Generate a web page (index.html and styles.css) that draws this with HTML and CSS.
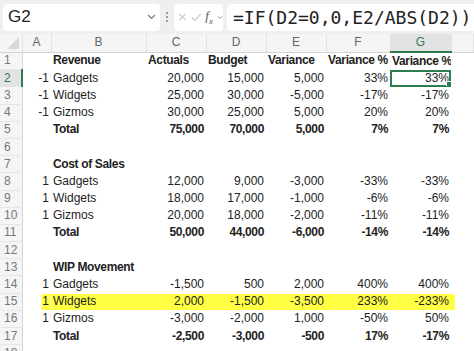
FILE: index.html
```html
<!DOCTYPE html>
<html lang="en">
  <head>
    <meta charset="UTF-8" />
    <meta name="viewport" content="width=device-width, initial-scale=1.0" />
    <title>Variance sheet</title>
    <link rel="stylesheet" href="styles.css">
  </head>
  <body>
    <div class="toolbar">
      <div class="namebox">
        <span>G2</span>
        <svg class="chev" width="9" height="6" viewBox="0 0 9 6"><path d="M1 1l3.5 3.5L8 1" fill="none" stroke="#777" stroke-width="1.2"/></svg>
      </div>
      <div class="dots"><i></i><i></i><i></i></div>
      <div class="fxbox">
        <svg width="10" height="10" viewBox="0 0 10 10"><path d="M1.5 1.5l7 7M8.5 1.5l-7 7" stroke="#c4c4c4" stroke-width="1.2"/></svg>
        <svg width="12" height="10" viewBox="0 0 12 10"><path d="M1 5.5l3.5 3.5L11 1.5" fill="none" stroke="#c4c4c4" stroke-width="1.2"/></svg>
        <span class="fx">f<sub>x</sub></span>
        <svg width="7" height="5" viewBox="0 0 7 5"><path d="M1 1l2.5 2.5L6 1" fill="none" stroke="#888" stroke-width="1"/></svg>
      </div>
      <div class="formula">=IF(D2=0,0,E2/ABS(D2))</div>
    </div>

    <table class="sheet">
      <colgroup>
        <col class="c-rh"><col class="c-a"><col class="c-b"><col class="c-n"><col class="c-n"><col class="c-n"><col class="c-f"><col class="c-g"><col>
      </colgroup>
      <thead>
        <tr>
          <th class="corner"><span class="tri"></span></th>
          <th>A</th><th>B</th><th>C</th><th>D</th><th>E</th><th>F</th><th class="active">G</th><th></th>
        </tr>
      </thead>
      <tbody>
        <tr><td class="rh">1</td><td></td><td class="b">Revenue</td><td class="b">Actuals</td><td class="b">Budget</td><td class="b">Variance</td><td class="b">Variance %</td><td class="b">Variance %</td><td></td></tr>
        <tr><td class="rh sel">2</td><td class="r">-1</td><td>Gadgets</td><td class="r">20,000</td><td class="r">15,000</td><td class="r">5,000</td><td class="r">33%</td><td class="r cur">33%<span class="handle"></span></td><td></td></tr>
        <tr><td class="rh">3</td><td class="r">-1</td><td>Widgets</td><td class="r">25,000</td><td class="r">30,000</td><td class="r">-5,000</td><td class="r">-17%</td><td class="r">-17%</td><td></td></tr>
        <tr><td class="rh">4</td><td class="r">-1</td><td>Gizmos</td><td class="r">30,000</td><td class="r">25,000</td><td class="r">5,000</td><td class="r">20%</td><td class="r">20%</td><td></td></tr>
        <tr><td class="rh">5</td><td></td><td class="b">Total</td><td class="r b">75,000</td><td class="r b">70,000</td><td class="r b">5,000</td><td class="r b">7%</td><td class="r b">7%</td><td></td></tr>
        <tr><td class="rh">6</td><td></td><td></td><td></td><td></td><td></td><td></td><td></td><td></td></tr>
        <tr><td class="rh">7</td><td></td><td class="b">Cost of Sales</td><td></td><td></td><td></td><td></td><td></td><td></td></tr>
        <tr><td class="rh">8</td><td class="r">1</td><td>Gadgets</td><td class="r">12,000</td><td class="r">9,000</td><td class="r">-3,000</td><td class="r">-33%</td><td class="r">-33%</td><td></td></tr>
        <tr><td class="rh">9</td><td class="r">1</td><td>Widgets</td><td class="r">18,000</td><td class="r">17,000</td><td class="r">-1,000</td><td class="r">-6%</td><td class="r">-6%</td><td></td></tr>
        <tr><td class="rh">10</td><td class="r">1</td><td>Gizmos</td><td class="r">20,000</td><td class="r">18,000</td><td class="r">-2,000</td><td class="r">-11%</td><td class="r">-11%</td><td></td></tr>
        <tr><td class="rh">11</td><td></td><td class="b">Total</td><td class="r b">50,000</td><td class="r b">44,000</td><td class="r b">-6,000</td><td class="r b">-14%</td><td class="r b">-14%</td><td></td></tr>
        <tr><td class="rh">12</td><td></td><td></td><td></td><td></td><td></td><td></td><td></td><td></td></tr>
        <tr><td class="rh">13</td><td></td><td class="b">WIP Movement</td><td></td><td></td><td></td><td></td><td></td><td></td></tr>
        <tr><td class="rh">14</td><td class="r">1</td><td>Gadgets</td><td class="r">-1,500</td><td class="r">500</td><td class="r">2,000</td><td class="r">400%</td><td class="r">400%</td><td></td></tr>
        <tr class="hl"><td class="rh">15</td><td class="r hl-start">1</td><td>Widgets</td><td class="r">2,000</td><td class="r">-1,500</td><td class="r">-3,500</td><td class="r">233%</td><td class="r">-233%</td><td class="hl-end"></td></tr>
        <tr><td class="rh">16</td><td class="r">1</td><td>Gizmos</td><td class="r">-3,000</td><td class="r">-2,000</td><td class="r">1,000</td><td class="r">-50%</td><td class="r">50%</td><td></td></tr>
        <tr><td class="rh">17</td><td></td><td class="b">Total</td><td class="r b">-2,500</td><td class="r b">-3,000</td><td class="r b">-500</td><td class="r b">17%</td><td class="r b">-17%</td><td></td></tr>
        <tr><td class="rh">18</td><td></td><td></td><td></td><td></td><td></td><td></td><td></td><td></td></tr>
      </tbody>
    </table>
  </body>
</html>
```
FILE: styles.css
```css
body {
  margin: 0;
  background: #fff;
  font-family: "Liberation Sans", Arial, sans-serif;
  color: #222;
  overflow: hidden;
}
.toolbar {
  display: flex;
  align-items: center;
  height: 34px;
  background: #efefef;
  padding-left: 3px;
}
.namebox {
  display: flex;
  align-items: center;
  justify-content: space-between;
  width: 157px;
  height: 27px;
  box-sizing: border-box;
  background: #fff;
  border-radius: 4px;
  padding: 0 4px 0 5px;
  font-size: 17px;
  color: #222;
}
.dots {
  display: flex;
  flex-direction: column;
  gap: 2px;
  margin: 0 6px 0 6px;
}
.dots i {
  display: block;
  width: 2px;
  height: 2px;
  background: #999;
}
.fxbox {
  display: flex;
  align-items: center;
  gap: 4px;
  width: 49px;
  height: 27px;
  box-sizing: border-box;
  background: #fff;
  border-radius: 4px;
  padding-left: 4px;
}
.fx {
  font-family: "Liberation Serif", serif;
  font-style: italic;
  font-size: 13px;
  color: #555;
}
.fx sub {
  font-size: 9px;
}
.formula {
  flex: 1;
  height: 27px;
  margin-left: 4px;
  background: #fff;
  border-radius: 4px 0 0 4px;
  padding-left: 6px;
  font-family: "DejaVu Sans Mono", monospace;
  font-size: 18px;
  line-height: 27px;
  color: #222;
  white-space: nowrap;
  overflow: hidden;
}
.sheet {
  border-collapse: collapse;
  table-layout: fixed;
  width: 474px;
  font-size: 12px;
}
.c-rh { width: 22px; }
.c-a { width: 29px; }
.c-b { width: 95px; }
.c-n { width: 60px; }
.c-f { width: 64px; }
.c-g { width: 61px; }
th {
  height: 17px;
  padding: 0;
  background: #f5f5f5;
  border-right: 1px solid #e2e2e2;
  border-bottom: 1px solid #d4d4d4;
  font-weight: normal;
  font-size: 12px;
  line-height: 17px;
  color: #666;
  text-align: center;
}
th.active {
  background: #e3e3e3;
  color: #3a7a55;
  border-bottom: 2px solid #2e7d4f;
}
th.corner {
  position: relative;
}
.tri {
  position: absolute;
  right: 3px;
  bottom: 3px;
  width: 0;
  height: 0;
  border-left: 12px solid transparent;
  border-bottom: 12px solid #d8d8d8;
}
td {
  height: 16.2px;
  padding: 0 2px;
  white-space: nowrap;
  overflow: hidden;
  line-height: 15px;
  border-bottom: 1px solid transparent;
}
td.rh {
  background: #f5f5f5;
  border-right: 1px solid #d4d4d4;
  border-bottom: 1px solid #e6e6e6;
  color: #777;
  text-align: left;
  padding-left: 4px;
  font-size: 12px;
}
td.rh.sel {
  color: #3a7a55;
  background: #e3e3e3;
  border-right: 2px solid #2e7d4f;
}
.r {
  text-align: right;
}
.b {
  font-weight: bold;
  letter-spacing: -0.35px;
}
td.cur {
  position: relative;
  outline: 2px solid #2e7d4f;
  outline-offset: -2px;
}
.handle {
  position: absolute;
  right: -1px;
  bottom: -1px;
  width: 4px;
  height: 4px;
  background: #2e7d4f;
  border: 1px solid #fff;
}
tr.hl td {
  background: #ffff44;
}
tr.hl td.rh {
  background: #f5f5f5;
}
tr.hl td.hl-start {
  background: linear-gradient(to right, transparent 19px, #ffff44 19px);
}
tr.hl td.hl-end {
  background: linear-gradient(to right, #ffff44 4px, transparent 4px);
}
```
